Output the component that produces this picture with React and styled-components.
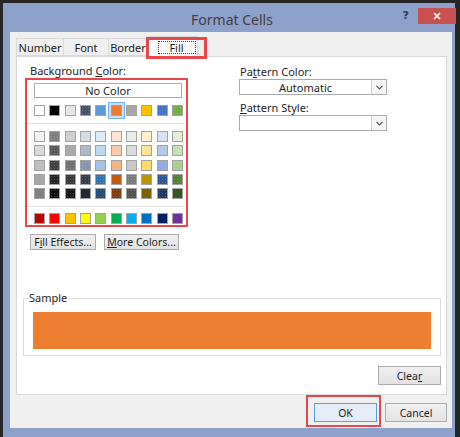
import styled, { createGlobalStyle } from 'styled-components'

const GlobalStyle = createGlobalStyle`
    html, body {
        margin: 0;
        padding: 0;
        background: #262626;
    }
    body {
        font-family: "Noto Sans", "Liberation Sans", sans-serif;
        font-size: 11px;
        color: #1e1e1e;
    }
`

// first row = theme colours, then five shade rows, then the standard row
const themeRow = ['#ffffff', '#000000', '#e7e6e6', '#44546a', '#5b9bd5', '#ed7d31', '#a5a5a5', '#ffc000', '#4472c4', '#70ad47']
const shades = [
    ['#f2f2f2', '#7f7f7f', '#d0cece', '#d6dce4', '#deebf6', '#fbe5d5', '#ededed', '#fff2cc', '#dae3f3', '#e2efd9'],
    ['#d9d9d9', '#595959', '#aeaaaa', '#adb9ca', '#bdd7ee', '#f7cbac', '#dbdbdb', '#fee599', '#b4c7e7', '#c5e0b3'],
    ['#bfbfbf', '#404040', '#757171', '#8497b0', '#9dc3e6', '#f4b183', '#c9c9c9', '#ffd965', '#8faadc', '#a8d08d'],
    ['#a6a6a6', '#262626', '#3a3838', '#333f4f', '#2e75b5', '#c55a11', '#7b7b7b', '#bf9000', '#2f5597', '#538135'],
    ['#808080', '#0d0d0d', '#161616', '#222a35', '#1f4e79', '#843c0b', '#525252', '#7f6000', '#203864', '#375623'],
]
const standard = ['#c00000', '#ff0000', '#ffc000', '#ffff00', '#92d050', '#00b050', '#00b0f0', '#0070c0', '#002060', '#7030a0']

// cells that show the dithered look in the screenshot
const dottedTheme = [3, 6, 8, 9]
const dottedShades = [
    [1, 2, 4, 5, 7],
    [1, 3, 4, 5, 7, 8],
    [1, 2, 3, 5, 8, 9],
    [1, 2, 3, 4, 6, 8, 9],
    [1, 2, 4, 5, 6, 8],
]

const App = () => {
    return (
        <Page>
            <GlobalStyle />
            <Window>
                <TitleBar>
                    <span />
                    <Title>Format Cells</Title>
                    <Controls>
                        <Help>?</Help>
                        <Close>
                            <svg width='8' height='8' viewBox='0 0 8 8'>
                                <path d='M1 1 L7 7 M7 1 L1 7' stroke='#fff' strokeWidth='1.6' />
                            </svg>
                        </Close>
                    </Controls>
                </TitleBar>

                <Body>
                    <TabRow>
                        <Tab w={48}>Number</Tab>
                        <Tab w={46}>Font</Tab>
                        <Tab w={40}>Border</Tab>
                        <Tab w={51} active>
                            <Focus>Fill</Focus>
                            <TabMark />
                        </Tab>
                    </TabRow>

                    <Panel>
                        <TopArea>
                            <LeftCol>
                                <Label>
                                    Background <u>C</u>olor:
                                </Label>
                                <Palette>
                                    <NoColor>No Color</NoColor>
                                    <SwatchGrid>
                                        {themeRow.map((c, i) => (
                                            <Swatch
                                                key={c + i}
                                                $color={c}
                                                $dotted={dottedTheme.includes(i)}
                                                $selected={i === 5}
                                            />
                                        ))}
                                    </SwatchGrid>
                                    <Divider />
                                    <SwatchGrid $rowGap={3.3}>
                                        {shades.map((row, r) =>
                                            row.map((c, i) => (
                                                <Swatch
                                                    key={r + '-' + i}
                                                    $color={c}
                                                    $dotted={dottedShades[r].includes(i)}
                                                />
                                            ))
                                        )}
                                    </SwatchGrid>
                                    <Divider $gap={6} />
                                    <SwatchGrid>
                                        {standard.map((c, i) => (
                                            <Swatch key={c + i} $color={c} />
                                        ))}
                                    </SwatchGrid>
                                </Palette>
                                <ButtonRow>
                                    <Button w={66} h={16}>
                                        F<u>i</u>ll Effects...
                                    </Button>
                                    <Button w={75} h={16}>
                                        <u>M</u>ore Colors...
                                    </Button>
                                </ButtonRow>
                            </LeftCol>

                            <RightCol>
                                <Label $top={1}>
                                    Pa<u>t</u>tern Color:
                                </Label>
                                <Select>
                                    <SelectValue>Automatic</SelectValue>
                                    <Arrow>
                                        <Chevron />
                                    </Arrow>
                                </Select>
                                <Label $top={6}>
                                    <u>P</u>attern Style:
                                </Label>
                                <Select>
                                    <SelectValue />
                                    <Arrow>
                                        <Chevron />
                                    </Arrow>
                                </Select>
                            </RightCol>
                        </TopArea>

                        <Sample>
                            <legend>Sample</legend>
                            <SampleFill $color='#ed7d31' />
                        </Sample>

                        <PanelFooter>
                            <Button w={63} h={19}>
                                Clea<u>r</u>
                            </Button>
                        </PanelFooter>
                    </Panel>

                    <Footer>
                        <Marked>
                            <Button w={63} h={19} primary>
                                OK
                            </Button>
                        </Marked>
                        <Button w={62} h={19}>
                            Cancel
                        </Button>
                    </Footer>
                </Body>
            </Window>
        </Page>
    )
}

const Chevron = () => (
    <svg width='7' height='5' viewBox='0 0 7 5'>
        <path d='M0.5 0.8 L3.5 3.8 L6.5 0.8' fill='none' stroke='#555' strokeWidth='1.2' />
    </svg>
)

const Page = styled.div`
    width: 460px;
    height: 437px;
    box-sizing: border-box;
    padding: 3px 5px 0 3px;
    overflow: hidden;
`

const Window = styled.div`
    height: 434px;
    display: flex;
    flex-direction: column;
    background: #8ea1cb;
`

const TitleBar = styled.div`
    height: 29px;
    display: grid;
    grid-template-columns: 1fr auto 1fr;
    align-items: start;
`

const Title = styled.div`
    padding-top: 8px;
    padding-left: 6px;
    font-size: 14px;
    line-height: 17px;
    color: #404040;
`

const Controls = styled.div`
    justify-self: end;
    display: flex;
    align-items: flex-start;
    gap: 9px;
    padding-top: 5px;
    margin-right: -1px;
`

const Help = styled.div`
    font-family: "DejaVu Sans", sans-serif;
    font-weight: bold;
    font-size: 11px;
    line-height: 14px;
    color: #303a4f;
    padding-top: 1px;
`

const Close = styled.div`
    width: 38px;
    height: 16px;
    background: #c75050;
    display: flex;
    align-items: center;
    justify-content: center;
`

const Body = styled.div`
    height: 396px;
    margin: 0 3px 0 7px;
    box-sizing: border-box;
    padding: 4px 5px 0 6px;
    background: #f0f0f0;
    display: flex;
    flex-direction: column;
`

const TabRow = styled.div`
    height: 20px;
    display: flex;
    align-items: flex-end;
    padding-left: 1px;
    position: relative;
    z-index: 1;
`

const Tab = styled.div`
    position: relative;
    width: ${(p) => p.w}px;
    height: ${(p) => (p.active ? 21 : 18)}px;
    margin-bottom: ${(p) => (p.active ? -1 : 0)}px;
    margin-left: -1px;
    box-sizing: border-box;
    border: 1px solid #d9d9d9;
    border-bottom: ${(p) => (p.active ? 'none' : '1px solid #d9d9d9')};
    background: ${(p) => (p.active ? '#ffffff' : '#f0f0f0')};
    display: flex;
    align-items: center;
    justify-content: center;
    font-size: 11px;
    color: #222;
`

const Focus = styled.span`
    width: 38px;
    height: 13px;
    margin-left: 8px;
    box-sizing: border-box;
    border: 1px dotted #444;
    display: flex;
    align-items: center;
    justify-content: center;
    line-height: 11px;
`

// red annotation drawn over the screenshot
const TabMark = styled.span`
    position: absolute;
    left: -2px;
    right: -10px;
    top: 0;
    bottom: -2px;
    border: 3px solid #e8474c;
`

const Panel = styled.div`
    height: 339px;
    box-sizing: border-box;
    background: #ffffff;
    border: 1px solid #d9d9d9;
    display: flex;
    flex-direction: column;
`

const TopArea = styled.div`
    display: flex;
    padding: 7px 0 0 8px;
`

const LeftCol = styled.div`
    width: 163px;
    display: flex;
    flex-direction: column;
`

const RightCol = styled.div`
    width: 148px;
    margin-left: 51px;
    display: flex;
    flex-direction: column;
`

const Label = styled.div`
    padding-left: ${(p) => (p.$top === undefined ? 5 : 1)}px;
    margin-top: ${(p) => p.$top || 0}px;
    line-height: 14px;
    font-size: 11px;
    u {
        text-underline-offset: 1px;
    }
`

const Palette = styled.div`
    height: 149px;
    box-sizing: border-box;
    border: 2px solid #e8474c;
    padding: 3px 5px 0 7px;
    display: flex;
    flex-direction: column;
`

const NoColor = styled.div`
    width: 148px;
    height: 15px;
    box-sizing: border-box;
    border: 1px solid #acacac;
    display: flex;
    align-items: center;
    justify-content: center;
    font-size: 11px;
    margin-bottom: 7px;
`

const SwatchGrid = styled.div`
    display: grid;
    grid-template-columns: repeat(10, 11px);
    column-gap: 4.33px;
    row-gap: ${(p) => p.$rowGap || 0}px;
`

const Swatch = styled.div`
    width: 11px;
    height: 11px;
    box-sizing: border-box;
    border: 1px solid #a3a3a3;
    background-color: ${(p) => p.$color};
    background-image: ${(p) =>
        p.$dotted
            ? 'radial-gradient(circle, rgba(255,255,255,0.18) 0.5px, transparent 0.8px)'
            : 'none'};
    background-size: 3px 3px;
    box-shadow: ${(p) => (p.$selected ? '0 0 0 2px #c7e0f7, 0 0 0 3px #7db3e8' : 'none')};
`

const Divider = styled.div`
    height: 1px;
    background: #e3e3e3;
    margin: 7px -3px ${(p) => p.$gap || 7}px -7px;
`

const ButtonRow = styled.div`
    display: flex;
    gap: 8px;
    padding-left: 5px;
    margin-top: 7px;
`

const Button = styled.div`
    width: ${(p) => p.w}px;
    height: ${(p) => p.h}px;
    box-sizing: border-box;
    border: 1px solid ${(p) => (p.primary ? '#5c9fe0' : '#acacac')};
    background: ${(p) => (p.primary ? '#e5eef8' : 'linear-gradient(#f0f0f0, #e3e3e3)')};
    display: flex;
    align-items: center;
    justify-content: center;
    font-size: 10.5px;
    color: #1e1e1e;
    white-space: nowrap;
`

const Select = styled.div`
    height: 16px;
    box-sizing: border-box;
    margin-top: 0;
    border: 1px solid #ababab;
    background: #ffffff;
    display: flex;
`

const SelectValue = styled.div`
    flex: 1;
    display: flex;
    align-items: center;
    justify-content: center;
    font-size: 11px;
`

const Arrow = styled.div`
    width: 14px;
    border-left: 1px solid #cfcfcf;
    background: #f6f6f6;
    display: flex;
    align-items: center;
    justify-content: center;
`

const Sample = styled.fieldset`
    margin: 41px 0 0 6px;
    width: 418px;
    box-sizing: border-box;
    padding: 7px 9px 6px 9px;
    border: 1px solid #dcdcdc;
    legend {
        padding: 0 1px;
        margin-left: -5px;
        font-size: 11px;
        line-height: 14px;
    }
`

const SampleFill = styled.div`
    height: 37px;
    background: ${(p) => p.$color};
`

const PanelFooter = styled.div`
    display: flex;
    justify-content: flex-end;
    padding-right: 5px;
    margin-top: 10px;
`

const Footer = styled.div`
    display: flex;
    justify-content: flex-end;
    gap: 8px;
    margin-top: 8px;
`

// red annotation around the OK button
const Marked = styled.div`
    position: relative;
    &::after {
        content: '';
        position: absolute;
        left: -8px;
        right: -4px;
        top: -8px;
        bottom: -5px;
        border: 2px solid #e8474c;
    }
`

export default App
